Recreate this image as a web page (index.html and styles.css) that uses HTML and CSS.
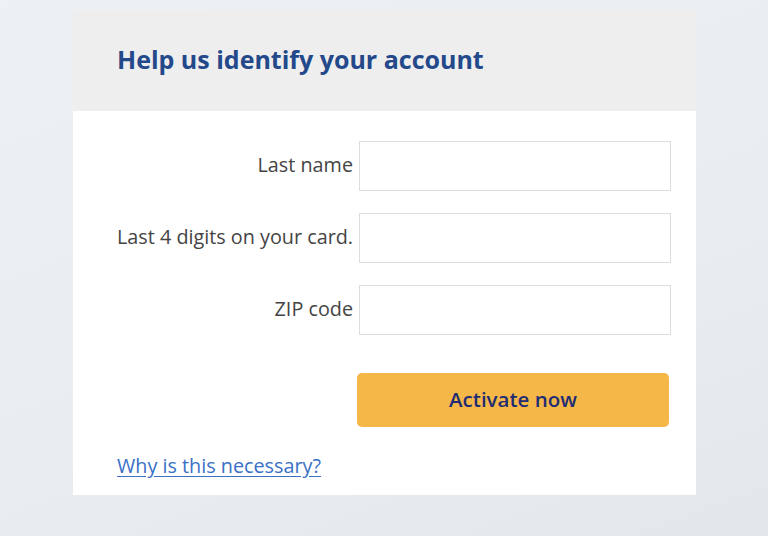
FILE: index.html
```html
<!DOCTYPE html>
<html lang="en">
<head>
<meta charset="utf-8">
<title>Help us identify your account</title>
<link rel="stylesheet" href="styles.css">
</head>
<body>
<div class="page">
  <div class="card">
    <div class="card-header">
      <h1 class="title">Help us identify your account</h1>
    </div>
    <form class="card-body">
      <div class="fields">
        <label class="label" for="lastname">Last name</label>
        <input class="input" id="lastname" type="text">
        <label class="label" for="digits">Last 4 digits on your card.</label>
        <input class="input" id="digits" type="text">
        <label class="label" for="zip">ZIP code</label>
        <input class="input" id="zip" type="text">
        <span class="spacer"></span>
        <button class="button" type="button">Activate now</button>
      </div>
      <a class="link" href="#">Why is this necessary?</a>
    </form>
  </div>
</div>
</body>
</html>
```
FILE: styles.css
```css
html, body {
  margin: 0;
  padding: 0;
}
body {
  font-family: "Open Sans", "Liberation Sans", sans-serif;
  background: linear-gradient(160deg, #eef1f4 0%, #e9edf0 60%, #e3e7eb 100%);
  min-height: 536px;
}
.page {
  padding: 10px 0 0 73px;
}
.card {
  width: 623px;
  background: #ffffff;
}
.card-header {
  background: #eeeeee;
  height: 101px;
  padding: 0 44px 4px;
  box-sizing: border-box;
  display: flex;
  align-items: center;
}
.title {
  margin: 0;
  font-size: 25px;
  font-weight: 700;
  color: #24498b;
  line-height: 34px;
}
.card-body {
  padding: 30px 25px 16px 44px;
  display: flex;
  flex-direction: column;
}
.fields {
  display: grid;
  grid-template-columns: 236px 312px;
  column-gap: 6px;
  row-gap: 22px;
  align-items: center;
}
.label {
  text-align: right;
  font-size: 19.8px;
  color: #444444;
  white-space: nowrap;
  margin-bottom: 4px;
}
.input {
  height: 50px;
  box-sizing: border-box;
  border: 1px solid #dddddd;
  margin: 0;
  padding: 0 10px;
  font: inherit;
  background: #fff;
}
.spacer {
  display: block;
}
.button {
  margin: 16px 0 0 -2px;
  height: 54px;
  width: 312px;
  border: none;
  border-radius: 5px;
  padding: 0 0 3px;
  background: #f4b748;
  color: #1f2c73;
  font-family: inherit;
  font-size: 20.5px;
  font-weight: 600;
}
.link {
  margin-top: 25px;
  align-self: flex-start;
  font-size: 19.8px;
  color: #3a70c6;
  text-decoration: underline;
  text-underline-offset: 3px;
  line-height: 27px;
}
```
